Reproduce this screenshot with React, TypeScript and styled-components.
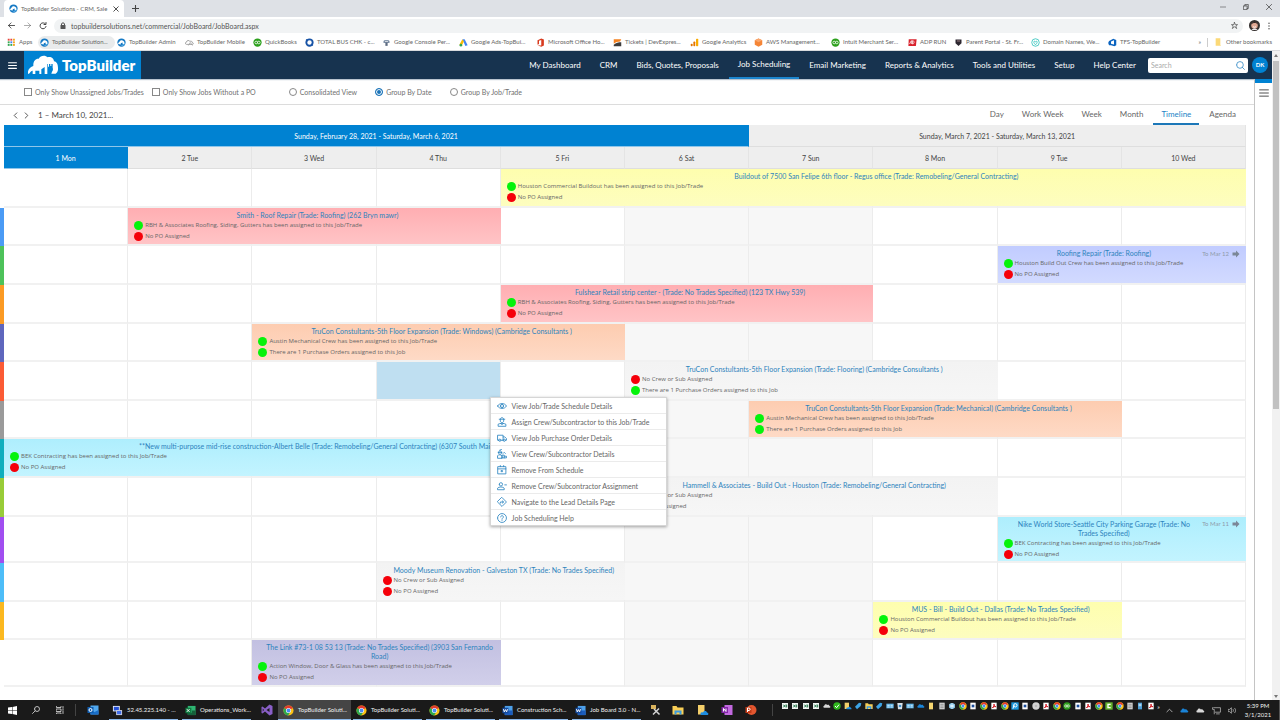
import React from "react";
import styled, { createGlobalStyle, css } from "styled-components";

const GlobalStyle = createGlobalStyle`
  *, *::before, *::after { box-sizing: border-box; }
  html, body, #root { height: 100%; }
  body { margin: 0; background: #fff; font-family: Lato, "Open Sans", sans-serif; font-size: 7px; line-height: 10px; color: #555; overflow: hidden; }
  button { font: inherit; color: inherit; border: 0; background: none; padding: 0; margin: 0; cursor: pointer; }
  input { font: inherit; margin: 0; }
  a { color: inherit; text-decoration: none; }
  ul { list-style: none; margin: 0; padding: 0; }
  svg { display: block; flex: none; }
`;

const blue = "#0082d2";
const navy = "#17334f";

const Screen = styled.div`
  display: flex;
  flex-direction: column;
  height: 100%;
  min-height: 720px;
`;

/* ---------- Browser chrome ---------- */

const TabStrip = styled.header`
  display: flex;
  align-items: flex-end;
  height: 17px;
  padding-left: 4px;
  background: #dee1e6;
`;
const Tab = styled.div`
  display: flex;
  align-items: center;
  gap: 3px;
  width: 120px;
  height: 17px;
  padding: 0 4px 0 5px;
  border-radius: 4px 4px 0 0;
  background: #fff;
`;
const TabTitle = styled.span`
  flex: 1;
  white-space: nowrap;
  font-size: 6px;
  color: #666;
`;
const IconButton = styled.button`
  display: flex;
  align-items: center;
  justify-content: center;
  width: 14px;
  height: 14px;
  color: #444;
`;
const TabClose = styled(IconButton)`
  width: 8px;
`;
const NewTab = styled(IconButton)`
  align-self: center;
  margin-left: 4px;
`;
const WindowButtons = styled.div`
  display: flex;
  align-self: flex-start;
  gap: 9px;
  margin-left: auto;
  padding-right: 4px;
`;
const AddressRow = styled.div`
  display: flex;
  align-items: center;
  height: 17px;
  padding: 0 4px;
  gap: 2px;
`;
const AddressBox = styled.div`
  display: flex;
  align-items: center;
  flex: 1;
  gap: 5px;
  height: 14px;
  margin: 0 4px 0 2px;
  padding: 0 2px 0 6px;
  border-radius: 7px;
  background: #f1f3f4;
`;
const AddressInput = styled.input`
  flex: 1;
  border: 0;
  padding: 0;
  background: none;
  font-size: 7px;
  line-height: 12px;
  color: #555;
  outline: none;
`;
const BookmarkBar = styled.nav`
  display: flex;
  align-items: center;
  height: 17px;
  padding: 0 8px 0 5px;
  font-size: 6px;
  color: #666;
  border-bottom: 1px solid #d8dadd;
`;
const Bookmark = styled.a<{ $w: number; $active?: boolean }>`
  display: flex;
  align-items: center;
  gap: 3px;
  width: ${(p) => p.$w}px;
  height: 13px;
  padding: 0 4px 0 2px;
  border-radius: 7px;
  background: ${(p) => (p.$active ? "#e9ebec" : "none")};
  white-space: nowrap;
`;
const BookmarkTail = styled.div`
  display: flex;
  align-items: center;
  gap: 6px;
  margin-left: auto;
  white-space: nowrap;
`;
const BookmarkRule = styled.i`
  width: 1px;
  height: 9px;
  background: #ccc;
`;
const FolderLink = styled.a`
  display: flex;
  align-items: center;
  gap: 4px;
`;

/* ---------- Application shell ---------- */

const Viewport = styled.div`
  display: flex;
  flex: 1;
  min-height: 0;
`;
const AppShell = styled.div`
  display: flex;
  flex-direction: column;
  flex: 1;
  min-width: 0;
`;
const NavBar = styled.nav`
  display: flex;
  align-items: center;
  height: 28px;
  padding-right: 4px;
  background: ${navy};
  color: #fff;
  box-shadow: 0 1px 1px #b9c4cf;
`;
const NavToggle = styled(IconButton)`
  width: 24px;
  height: 28px;
  color: #fff;
`;
const Brand = styled.a`
  display: flex;
  align-items: center;
  gap: 4px;
  width: 117px;
  height: 28px;
  padding-left: 4px;
  background: ${blue};
  font-size: 15px;
  line-height: 30px;
  font-weight: 800;
`;
const NavLinks = styled.ul`
  display: flex;
  gap: 1px;
  margin-left: auto;
`;
const NavLink = styled.a<{ $active?: boolean }>`
  display: block;
  height: 28px;
  padding: 0 9px;
  font-size: 8px;
  line-height: 28px;
  white-space: nowrap;
  ${(p) => p.$active && css`
    line-height: 26px;
    border-bottom: 2px solid #1c86cf;
  `}
`;
const SearchBox = styled.label`
  display: flex;
  align-items: center;
  width: 100px;
  height: 15px;
  margin: 0 4px 0 3px;
  padding: 0 3px;
  border-radius: 2px;
  background: #fff;
  color: #3d8fc9;
`;
const SearchInput = styled.input`
  flex: 1;
  min-width: 0;
  border: 0;
  padding: 0;
  outline: none;
  background: none;
  font-size: 7px;
  &::placeholder { color: #aaa; }
`;
const Avatar = styled.button`
  width: 16px;
  height: 16px;
  border-radius: 50%;
  background: ${blue};
  color: #fff;
  font-size: 6px;
  font-weight: 700;
`;
const Body = styled.div`
  display: flex;
  flex: 1;
  min-height: 0;
`;
const Main = styled.main`
  display: flex;
  flex-direction: column;
  flex: 1;
  min-width: 0;
  padding: 0 8px 13px 0;
  border-right: 1px solid #c4c4c4;
`;
const SidePanel = styled.aside`
  display: flex;
  flex-direction: column;
  align-items: center;
  width: 17px;
  padding-top: 3px;
  border-top: 4px solid ${blue};
`;
const Scrollbar = styled.div`
  display: flex;
  flex-direction: column;
  align-items: center;
  width: 8px;
  padding: 3px 1px 2px;
  gap: 4px;
  background: #f1f1f1;
  color: #777;
`;
const ScrollThumb = styled.i`
  width: 6px;
  height: 54%;
  background: #c1c1c1;
`;
const ScrollSpacer = styled.i`
  flex: 1;
`;

/* ---------- Filters and view switcher ---------- */

const FilterBar = styled.div`
  display: flex;
  align-items: center;
  height: 26px;
  margin-right: -8px;
  padding-left: 24px;
  border-bottom: 1px solid #dcdcdc;
  color: #707070;
`;
const Option = styled.label<{ $gap: number }>`
  display: flex;
  align-items: center;
  gap: 3px;
  margin-right: ${(p) => p.$gap}px;
  white-space: nowrap;
`;
const Toggle = styled.input`
  appearance: none;
  width: 8px;
  height: 8px;
  border: 1px solid #888;
  background: #fff;
  &[type="radio"] { border-radius: 50%; }
  &[type="radio"]:checked { border-color: #1a73b8; background: #1a73b8; box-shadow: inset 0 0 0 1px #fff; }
`;
const ViewBar = styled.div`
  display: flex;
  align-items: center;
  justify-content: space-between;
  height: 20px;
  padding: 0 2px 0 10px;
  font-size: 8px;
  color: #444;
`;
const Pager = styled.div`
  display: flex;
  align-items: center;
`;
const PagerButton = styled(IconButton)`
  width: 11px;
`;
const RangeLabel = styled.span`
  margin-left: 6px;
`;
const ViewTabs = styled.div`
  display: flex;
  gap: 2px;
`;
const ViewTab = styled.button<{ $active?: boolean }>`
  height: 20px;
  padding: 0 8px;
  line-height: 18px;
  border-bottom: 2px solid ${(p) => (p.$active ? "#1c77b8" : "transparent")};
  color: ${(p) => (p.$active ? "#2384c6" : "#666")};
`;

/* ---------- Timeline ---------- */

const Timeline = styled.section`
  display: flex;
  flex-direction: column;
  flex: 1;
`;
const columns = css`
  display: grid;
  grid-template-columns: repeat(10, 1fr);
`;
const HeaderRow = styled.div`
  ${columns}
  padding-left: 4px;
`;
const HeaderCell = styled.div<{ $span?: number; $active?: boolean }>`
  grid-column: span ${(p) => p.$span || 1};
  height: 22px;
  border-right: 1px solid #e4e4e4;
  border-bottom: 1px solid #dedede;
  background: #eee;
  color: #444;
  text-align: center;
  line-height: 22px;
  ${(p) => p.$active && css`
    background: ${blue};
    border-right-color: ${blue};
    border-bottom-color: #8fc6ea;
    color: #fff;
  `}
`;
const Row = styled.div<{ $mark: string; $tall?: boolean }>`
  ${columns}
  flex: ${(p) => (p.$tall ? 47 : 39)} 1 0;
  border-left: 4px solid ${(p) => p.$mark};
`;
const Cell = styled.div<{ $col: number; $off?: boolean; $selected?: boolean }>`
  position: relative;
  grid-area: 1 / ${(p) => p.$col};
  border-right: 1px solid #ececec;
  border-bottom: 2px solid #f1f1f1;
  background: ${(p) => (p.$selected ? "#bfdff1" : p.$off ? "#f7f7f7" : "#fff")};
`;
const tones = {
  yellow: ["#fefeae", "#fdfdbf"],
  pink: ["#ffaeb2", "#ffc4c6"],
  blue: ["#c1ccff", "#d2daff"],
  orange: ["#fdccb0", "#fedac6"],
  gray: ["#f3f3f3", "#f6f6f6"],
  cyan: ["#aeeefd", "#c3f4ff"],
  purple: ["#c2c0e1", "#d1cfea"],
};
const EventCard = styled.article<{ $start: number; $span: number; $tone: keyof typeof tones }>`
  z-index: 1;
  grid-row: 1;
  grid-column: ${(p) => p.$start} / span ${(p) => p.$span};
  margin-bottom: 2px;
  padding: 3px 6px 0;
  background: linear-gradient(${(p) => tones[p.$tone].join(",")});
`;
const EventTop = styled.div`
  display: flex;
  padding-left: 6px;
`;
const EventTitle = styled.a`
  flex: 1;
  font-size: 7px;
  line-height: 9px;
  text-align: center;
  color: #2d83bd;
`;
const Until = styled.span`
  display: flex;
  align-items: center;
  gap: 3px;
  height: 9px;
  margin-left: 4px;
  font-size: 6px;
  color: #8f9aab;
`;
const StatusLine = styled.p`
  display: flex;
  align-items: center;
  gap: 2px;
  margin: 0;
  font: 6px/11px "Open Sans", sans-serif;
  color: #666;
  white-space: nowrap;
`;
const Dot = styled.i<{ $ok: boolean }>`
  width: 9px;
  height: 9px;
  border-radius: 50%;
  background: ${(p) => (p.$ok ? "#05f30b" : "#f5000a")};
`;
const Menu = styled.ul`
  position: absolute;
  z-index: 10;
  top: 35px;
  left: 113px;
  width: 177px;
  background: #fff;
  border: 1px solid #d6d6d6;
  box-shadow: 0 1px 3px rgba(0, 0, 0, 0.35);
`;
const MenuItem = styled.li`
  border-bottom: 1px solid #ebebeb;
  &:last-child { border-bottom: 0; }
`;
const MenuButton = styled.button`
  display: flex;
  align-items: center;
  gap: 5px;
  width: 100%;
  height: 15px;
  padding: 0 6px;
  font-size: 7px;
  color: #666;
  svg { color: #2a84c0; }
`;

/* ---------- Taskbar ---------- */

const Taskbar = styled.footer`
  display: flex;
  height: 20px;
  background: #1a1a1a;
  color: #f0f0f0;
  font-size: 6px;
`;
const TaskIcon = styled.button<{ $w: number }>`
  display: flex;
  align-items: center;
  justify-content: center;
  width: ${(p) => p.$w}px;
`;
const TaskRule = styled.i`
  align-self: center;
  width: 1px;
  height: 12px;
  margin-left: 3px;
  background: #444;
`;
const TaskWindow = styled.button<{ $active?: boolean }>`
  display: flex;
  align-items: center;
  gap: 4px;
  width: ${(p) => (p.$active ? 73 : 69)}px;
  margin-right: ${(p) => (p.$active ? 2 : 4)}px;
  padding: 1px 0 0 ${(p) => (p.$active ? 5 : 3)}px;
  border-bottom: 1px solid #8db9ea;
  background: ${(p) => (p.$active ? "#454545" : "none")};
  white-space: nowrap;
`;
const QuickLaunch = styled.div`
  display: flex;
  flex: 1;
  justify-content: space-between;
  padding: 2px 6px 0 2px;
`;
const Tray = styled.div`
  display: flex;
  align-items: center;
  gap: 7px;
`;
const Clock = styled.time`
  width: 28px;
  text-align: center;
  line-height: 9px;
`;
const DesktopEdge = styled.i`
  align-self: stretch;
  width: 1px;
  background: #555;
`;

/* ---------- Icons ---------- */

const Line = ({ d, size = 8, box = 16, w = 1.5 }: { d: string; size?: number; box?: number; w?: number }) => (
  <svg width={size} height={size} viewBox={`0 0 ${box} ${box}`} fill="none" stroke="currentColor" strokeWidth={w} strokeLinecap="round" strokeLinejoin="round">
    <path d={d} />
  </svg>
);

const Elephant = () => (
  <svg width="30" height="20" viewBox="84 160 90 60" fill="#fff">
    <path d="M84 217C82 203 91 196 100 193C99 178 107 170 116 171C121 161 136 159 143 167C153 164 162 171 162 179C171 180 174 189 174 199C175 207 171 213 167 216H154L156 210C160 206 159 201 158 198V187H154V193H151V187H147V195H144V187H142V217H134V196L124 203V217H118V207H106V217H98V207C92 206 90 216 84 217Z" />
  </svg>
);

const Chrome = ({ size = 11 }: { size?: number }) => (
  <svg width={size} height={size} viewBox="0 0 24 24">
    <circle cx="12" cy="12" r="11" fill="#fbc116" />
    <path d="M12 12L2.5 6.5A11 11 0 0 1 21.5 6.5Z" fill="#e33b2e" />
    <path d="M12 12L2.5 6.5A11 11 0 0 0 11 23L16.500 14.500Z" fill="#2da94f" />
    <circle cx="12" cy="12" r="5.500" fill="#fff" />
    <circle cx="12" cy="12" r="4.200" fill="#4a8af4" />
  </svg>
);

type Glyph =
  | "apps" | "tb" | "cloud" | "qb" | "ring" | "wrench" | "ads" | "office" | "dx" | "bars" | "aws" | "adp" | "shield"
  | "gd" | "tfs" | "folder" | "xls" | "onedrive" | "check" | "tag" | "card" | "bin" | "note" | "doc" | "snow" | "chrome"
  | "word" | "pdf" | "blueapp" | "disc" | "camtasia" | "server" | "pc" | "outlook" | "vs" | "tools" | "explorer"
  | "share" | "onenote" | "ppt" | "bigword" | "bigxls" | "whitecloud";

const cloudPath = "M4 17C0 17 0 11 4 11C4 6 11 5 13 9C17 7 20 10 19 12C23 12 23 17 20 17Z";

const glyphs: Record<Exclude<Glyph, "chrome">, React.ReactNode> = {
  apps: <>{["#e8453c", "#e8453c", "#f5a623", "#34a853", "#4285f4", "#f5a623", "#34a853", "#34a853", "#f5a623"].map((c, i) => (
    <rect key={i} x={2 + (i % 3) * 7} y={2 + Math.floor(i / 3) * 7} width="5" height="5" fill={c} />
  ))}</>,
  tb: <><circle cx="12" cy="12" r="11" fill="#1579c4" /><path d="M3 16C3 11 6 12 7 9C9 5 15 5 17 8C20 9 20 12 19 16H15V12L10 14V17Z" fill="#fff" /><path d="M12 20A9 9 0 0 0 21 12" stroke="#8cd0f5" strokeWidth="2" fill="none" /></>,
  cloud: <><path d={cloudPath} fill="none" stroke="#8a8a8a" strokeWidth="2" /><path d="M9 20L14 12L20 20" fill="none" stroke="#999" strokeWidth="2" /></>,
  qb: <><circle cx="12" cy="12" r="11" fill="#2ca01c" /><circle cx="8.500" cy="12" r="3.500" fill="none" stroke="#fff" strokeWidth="2" /><circle cx="15.500" cy="12" r="3.500" fill="none" stroke="#fff" strokeWidth="2" /></>,
  ring: <><circle cx="12" cy="12" r="8.500" fill="none" stroke="#1753a6" strokeWidth="5" /><path d="M3 4L7 8M17 16L21 20" stroke="#1753a6" strokeWidth="3" /></>,
  wrench: <><path d="M4 9C4 4 20 4 20 9V13H4Z" fill="#7d8fa6" /><rect x="9" y="12" width="6" height="9" fill="#5d6b80" /><path d="M8 9H16" stroke="#fff" strokeWidth="2" /></>,
  ads: <><path d="M9 3L15 3L23 19L17 21Z" fill="#4285f4" /><path d="M9 3L13 9L7 21L1 18Z" fill="#fbbc04" /><circle cx="5" cy="19" r="3.500" fill="#34a853" /></>,
  office: <path fillRule="evenodd" d="M14 1L21 4V20L14 23L4 19L14 20V5L8 7V16L4 18V6Z" fill="#d83b1f" />,
  dx: <><path d="M2 3H22L19 9C12 9 7 11 2 15Z" fill="#f58220" /><path d="M2 18C8 12 15 11 22 11V22H2Z" fill="#3d3d3d" /></>,
  bars: <><rect x="2" y="15" width="5" height="7" rx="2" fill="#e37400" /><rect x="9" y="9" width="5" height="13" rx="2" fill="#e37400" /><rect x="16" y="2" width="6" height="20" rx="2" fill="#f9ab00" /></>,
  aws: <><path d="M12 1L22 6V18L12 23L2 18V6Z" fill="#f58536" /><path d="M12 1L22 6L12 11L2 6Z" fill="#f9a56b" /></>,
  adp: <><path d="M2 3H23L21 21H1Z" fill="#d9232e" /><path d="M4 16L9 7V16M12 7V16C17 16 18 7 12 7" stroke="#fff" strokeWidth="2" fill="none" /></>,
  shield: <><path d="M4 4H20V14L12 21L4 14Z" fill="#2d2730" /><path d="M8 8H16" stroke="#b99" strokeWidth="2" /></>,
  gd: <><circle cx="12" cy="12" r="10" fill="none" stroke="#1bbcb4" strokeWidth="2" /><path d="M12 18C5 12 7 6 12 10C17 6 19 12 12 18Z" fill="none" stroke="#1bbcb4" strokeWidth="2" /></>,
  tfs: <path fillRule="evenodd" d="M3 8L14 2L22 5V19L17 22L8 19H3L1 15V11ZM8 9V15L16 17V6Z" fill="#0b64c0" />,
  folder: <path d="M5 1H19V20L21 23H5Z" fill="#fbd977" />,
  xls: <><rect x="3" y="3" width="18" height="18" fill="#f2f7f3" /><path d="M7 8L14 16M14 8L7 16M17 8V16" stroke="#217346" strokeWidth="3" /></>,
  onedrive: <path d={cloudPath} fill="#1a84d8" />,
  whitecloud: <path d={cloudPath} fill="#d8d8d8" />,
  check: <><circle cx="12" cy="12" r="11" fill="#2fb61d" /><path d="M6 12L11 17L18 8" stroke="#fff" strokeWidth="3" fill="none" /></>,
  tag: <path d="M3 14L15 2L22 4L20 12L9 22Z" fill="#3ca4e6" />,
  card: <><rect x="1" y="5" width="22" height="14" fill="#5eb2e4" /><path d="M4 10H11M14 10H20M4 15H11M14 15H20" stroke="#fff" strokeWidth="2" /></>,
  bin: <><path d="M4 3H20L18 22H6Z" fill="#d9e3ea" /><circle cx="12" cy="12" r="4" fill="#3f8fcb" /></>,
  note: <path d="M6 2H18V22H6Z" fill="#f6d670" />,
  doc: <><rect x="4" y="2" width="16" height="20" fill="#d5d5d5" /><path d="M7 7H17M7 12H17M7 17H17" stroke="#777" strokeWidth="2" /></>,
  snow: <><circle cx="12" cy="12" r="9" fill="#7cc3ec" /><path d="M12 3V21M4 8L20 16M4 16L20 8" stroke="#fff" strokeWidth="2" /></>,
  word: <><rect x="4" y="2" width="16" height="20" fill="#fff" /><rect x="8" y="8" width="8" height="8" fill="#1c4f9c" /></>,
  pdf: <><rect x="4" y="2" width="16" height="20" fill="#fff" /><path d="M7 18C12 14 12 9 12 6C12 11 15 14 18 14C14 13 10 14 7 18Z" stroke="#d4202a" strokeWidth="3" fill="none" /></>,
  blueapp: <><rect x="1" y="1" width="22" height="22" fill="#1e9be0" /><circle cx="13" cy="10" r="5" fill="none" stroke="#fff" strokeWidth="3" /><path d="M9 9L6 20" stroke="#fff" strokeWidth="3" /></>,
  disc: <><circle cx="12" cy="12" r="11" fill="#d3d3d3" /><circle cx="12" cy="12" r="4" fill="#bbb" /></>,
  camtasia: <><rect x="1" y="1" width="22" height="22" fill="#65b32e" /><path d="M17 7H9V17H17" stroke="#fff" strokeWidth="4" fill="none" /></>,
  server: <><rect x="6" y="2" width="12" height="20" fill="#4e9fd6" /><path d="M8 7H16M8 11H16" stroke="#fff" strokeWidth="2" /></>,
  pc: <><rect x="2" y="2" width="15" height="12" fill="#e3e9f7" /><rect x="4" y="4" width="11" height="8" fill="#2550d8" /><rect x="9" y="11" width="13" height="11" fill="#c7cde0" /><rect x="11" y="13" width="9" height="7" fill="#3f6be8" /></>,
  outlook: <><rect x="7" y="3" width="16" height="18" fill="#50a8ee" /><path d="M7 12L15 16L23 12V21H7Z" fill="#1a6fc9" /><rect x="1" y="6" width="12" height="12" fill="#0f5db0" /><circle cx="7" cy="12" r="3" fill="none" stroke="#fff" strokeWidth="2" /></>,
  vs: <path fillRule="evenodd" d="M17 1L23 4V20L17 23L8 15L3 19L1 18V6L3 5L8 9ZM17 8L11 12L17 16ZM3.500 9V15L6 12Z" fill="#8a5fc7" />,
  tools: <><path d="M4 2H14V10H4Z" fill="#d8b25c" /><path d="M8 21L20 9M10 10L21 21" stroke="#d4d4d4" strokeWidth="3" /></>,
  explorer: <><path d="M1 4H9L11 7H23V21H1Z" fill="#f9cf57" /><path d="M5 21V13H19V21H15V17H9V21Z" fill="#3b9be0" /></>,
  share: <><path d="M2 2H15V21H2Z" fill="#f4cf6a" /><path d="M8 22C5 18 9 15 12 17C14 12 20 14 20 17C24 18 23 22 21 22Z" fill="#1f8de0" /></>,
  onenote: <><rect x="7" y="2" width="16" height="20" fill="#c269e0" /><rect x="1" y="6" width="13" height="12" fill="#8326a8" /><path d="M5 15V9L10 15V9" stroke="#fff" strokeWidth="2" fill="none" /></>,
  ppt: <><circle cx="13" cy="12" r="10" fill="#e2562f" /><rect x="1" y="6" width="12" height="12" fill="#c13a17" /><path d="M5 16V8H8C11 8 11 13 8 13H5" stroke="#fff" strokeWidth="2" fill="none" /></>,
  bigword: <><rect x="6" y="2" width="17" height="20" fill="#4da0ea" /><path d="M6 12H23V22H6Z" fill="#1b5cbe" /><rect x="1" y="6" width="13" height="12" fill="#144a9e" /><path d="M3 9L5 15L7.500 10L10 15L12 9" stroke="#fff" strokeWidth="2" fill="none" /></>,
  bigxls: <><rect x="6" y="2" width="17" height="20" fill="#2fb573" /><path d="M15 12H23V22H6V17H15Z" fill="#16603a" /><rect x="1" y="6" width="13" height="12" fill="#107c41" /><path d="M4 9L10 15M10 9L4 15" stroke="#fff" strokeWidth="2" /></>,
};

const Pic = ({ kind, size = 9 }: { kind: Glyph; size?: number }) =>
  kind === "chrome" ? <Chrome size={size} /> : <svg width={size} height={size} viewBox="0 0 24 24">{glyphs[kind]}</svg>;

/* ---------- Data ---------- */

const bookmarks: [Glyph, string, number][] = [
  ["apps", "Apps", 33],
  ["tb", "TopBuilder Solution...", 77],
  ["tb", "TopBuilder Admin", 68],
  ["cloud", "TopBuilder Mobile", 68],
  ["qb", "QuickBooks", 52],
  ["ring", "TOTAL BUS CHK - c...", 77],
  ["wrench", "Google Console Per...", 77],
  ["ads", "Google Ads-TopBui...", 77],
  ["office", "Microsoft Office Ho...", 77],
  ["dx", "Tickets | DevExpres...", 77],
  ["bars", "Google Analytics", 64],
  ["aws", "AWS Management...", 77],
  ["qb", "Intuit Merchant Ser...", 77],
  ["adp", "ADP RUN", 46],
  ["shield", "Parent Portal - St. Fr...", 77],
  ["gd", "Domain Names, We...", 77],
  ["tfs", "TFS-TopBuilder", 60],
];

const navItems = ["My Dashboard", "CRM", "Bids, Quotes, Proposals", "Job Scheduling", "Email Marketing", "Reports & Analytics", "Tools and Utilities", "Setup", "Help Center"];
const views = ["Day", "Work Week", "Week", "Month", "Timeline", "Agenda"];
const days = ["1 Mon", "2 Tue", "3 Wed", "4 Thu", "5 Fri", "6 Sat", "7 Sun", "8 Mon", "9 Tue", "10 Wed"];

const filters = [
  { type: "checkbox", label: "Only Show Unassigned Jobs/Trades", gap: 8 },
  { type: "checkbox", label: "Only Show Jobs Without a PO", gap: 33 },
  { type: "radio", label: "Consolidated View", gap: 18 },
  { type: "radio", label: "Group By Date", gap: 18, on: true },
  { type: "radio", label: "Group By Job/Trade", gap: 0 },
];

interface Job {
  mark: string;
  tall?: boolean;
  start: number;
  span: number;
  tone: keyof typeof tones;
  title: string;
  crew: string | null;
  po: boolean;
  until?: string;
  selected?: number;
}

const jobs: Job[] = [
  { mark: "#fff", start: 5, span: 6, tone: "yellow", title: "Buildout of 7500 San Felipe 6th floor - Regus office (Trade: Remobeling/General Contracting)", crew: "Houston Commercial Buildout", po: false },
  { mark: "#4b9bf5", start: 2, span: 3, tone: "pink", title: "Smith - Roof Repair (Trade: Roofing) (262 Bryn mawr)", crew: "RBH & Associates Roofing, Siding, Gutters", po: false },
  { mark: "#4dc25a", start: 9, span: 2, tone: "blue", title: "Roofing Repair (Trade: Roofing)", crew: "Houston Build Out Crew", po: false, until: "To Mar 12" },
  { mark: "#fb9a24", start: 5, span: 3, tone: "pink", title: "Fulshear Retail strip center - (Trade: No Trades Specified) (123 TX Hwy 539)", crew: "RBH & Associates Roofing, Siding, Gutters", po: false },
  { mark: "#5f67bd", start: 3, span: 3, tone: "orange", title: "TruCon Constultants-5th Floor Expansion (Trade: Windows) (Cambridge Consultants )", crew: "Austin Mechanical Crew", po: true },
  { mark: "#fb5b35", start: 6, span: 3, tone: "gray", title: "TruCon Constultants-5th Floor Expansion (Trade: Flooring) (Cambridge Consultants )", crew: null, po: true, selected: 4 },
  { mark: "#9a9a9a", start: 7, span: 3, tone: "orange", title: "TruCon Constultants-5th Floor Expansion (Trade: Mechanical) (Cambridge Consultants )", crew: "Austin Mechanical Crew", po: true },
  { mark: "#10aebd", start: 1, span: 5, tone: "cyan", title: "**New multi-purpose mid-rise construction-Albert Belle (Trade: Remobeling/General Contracting) (6307 South Main)", crew: "BEK Contracting", po: false },
  { mark: "#98cc38", start: 6, span: 3, tone: "gray", title: "Hammell & Associates - Build Out - Houston (Trade: Remobeling/General Contracting)", crew: null, po: false },
  { mark: "#a14ef0", tall: true, start: 9, span: 2, tone: "cyan", title: "Nike World Store-Seattle City Parking Garage (Trade: No Trades Specified)", crew: "BEK Contracting", po: false, until: "To Mar 11" },
  { mark: "#4dbdf8", start: 4, span: 2, tone: "gray", title: "Moody Museum Renovation - Galveston TX (Trade: No Trades Specified)", crew: null, po: false },
  { mark: "#fbb820", start: 8, span: 2, tone: "yellow", title: "MUS - Bill - Build Out - Dallas (Trade: No Trades Specified)", crew: "Houston Commercial Buildout", po: false },
  { mark: "#fff", tall: true, start: 3, span: 2, tone: "purple", title: "The Link #73-1 08 53 13 (Trade: No Trades Specified) (3903 San Fernando Road)", crew: "Action Window, Door & Glass", po: false },
];

const menuItems: [string, string][] = [
  ["View Job/Trade Schedule Details", "M1 9C4 3 14 3 17 9C14 15 4 15 1 9ZM6 9A3 3 0 1 0 12 9A3 3 0 1 0 6 9M9 9V9.200"],
  ["Assign Crew/Subcontractor to this Job/Trade", "M6 4C6 0 12 0 12 4M4 4H14M6 5V7C6 11 12 11 12 7V5M2 16V13C5 11 13 11 16 13V16ZM7 12L9 14L11 12"],
  ["View Job Purchase Order Details", "M3 13H1V4H11V13H7M11 7H14L17 10V13H15M3 13A2 2 0 1 0 7 13A2 2 0 1 0 3 13M11 13A2 2 0 1 0 15 13A2 2 0 1 0 11 13"],
  ["View Crew/Subcontractor Details", "M3 6C3 2 8 2 8 6M2 6H9M3 6V8C4 10 7 10 8 8V6M1 16V12C3 10 7 10 9 12V16ZM5 2L8 1M11 8L13 6L15 8M9 16V11H13V16M13 13H17V16H9"],
  ["Remove From Schedule", "M2 3H16V16H2ZM2 7H16M6 3V1M12 3V1M8 10H10V12H8Z"],
  ["Remove Crew/Subcontractor Assignment", "M4 6A3 3 0 1 0 10 6A3 3 0 1 0 4 6M1 15V13C3 10 11 10 13 13V15ZM14 7H17"],
  ["Navigate to the Lead Details Page", "M9 1L17 9L9 17L1 9ZM6 11V9H11M9.500 7L12 9L9.500 11"],
  ["Job Scheduling Help", "M1 9A8 8 0 1 0 17 9A8 8 0 1 0 1 9M6.500 7C6.500 4 11.500 4 11.500 7C11.500 9 9 9 9 11M9 13V13.200"],
];

const quickIcons: Glyph[] = [
  "xls", "xls", "xls", "xls", "whitecloud", "check", "share", "tag", "explorer", "tag", "card", "bin", "card", "onedrive", "note", "doc",
  "snow", "chrome", "word", "chrome", "pdf", "chrome", "blueapp", "word", "disc", "pdf", "chrome", "qb", "word", "pdf", "chrome",
  "camtasia", "chrome", "doc", "server", "pdf",
];

const ContextMenu = () => (
  <Menu role="menu">
    {menuItems.map(([label, d]) => (
      <MenuItem key={label} role="none">
        <MenuButton role="menuitem">
          <Line d={d} size={10} box={18} w={1.5} />
          {label}
        </MenuButton>
      </MenuItem>
    ))}
  </Menu>
);

const Status = ({ ok, children }: { ok: boolean; children: React.ReactNode }) => (
  <StatusLine><Dot $ok={ok} />{children}</StatusLine>
);

const JobRow = ({ job }: { job: Job }) => (
  <Row $mark={job.mark} $tall={job.tall}>
    {days.map((day, i) => (
      <Cell key={day} $col={i + 1} $off={i === 5 || i === 6} $selected={job.selected === i + 1}>
        {job.selected === i + 1 && <ContextMenu />}
      </Cell>
    ))}
    <EventCard $start={job.start} $span={job.span} $tone={job.tone}>
      <EventTop>
        <EventTitle href="#job">{job.title}</EventTitle>
        {job.until && (
          <Until>
            {job.until}
            <svg width="8" height="8" viewBox="0 0 16 16" fill="#7b8798"><path d="M1 5H8V1L15 8L8 15V11H1Z" /></svg>
          </Until>
        )}
      </EventTop>
      <Status ok={!!job.crew}>{job.crew ? `${job.crew} has been assigned to this Job/Trade` : "No Crew or Sub Assigned"}</Status>
      <Status ok={job.po}>{job.po ? "There are 1 Purchase Orders assigned to this Job" : "No PO Assigned"}</Status>
    </EventCard>
  </Row>
);

const Browser = () => (
  <>
    <TabStrip>
      <Tab>
        <Pic kind="tb" />
        <TabTitle>TopBuilder Solutions - CRM, Sale</TabTitle>
        <TabClose aria-label="Close tab"><Line size={6} w={2.500} d="M2 2L14 14M14 2L2 14" /></TabClose>
      </Tab>
      <NewTab aria-label="New tab"><Line size={7} w={2.500} d="M8 1V15M1 8H15" /></NewTab>
      <WindowButtons>
        <IconButton aria-label="Minimize"><Line size={6} d="M1 8H15" /></IconButton>
        <IconButton aria-label="Restore"><Line size={6} w={2} d="M2 5H11V15H2ZM5 5V1H14V12H11" /></IconButton>
        <IconButton aria-label="Close"><Line size={6} w={2} d="M1 1L15 15M15 1L1 15" /></IconButton>
      </WindowButtons>
    </TabStrip>
    <AddressRow>
      <IconButton aria-label="Back"><Line size={7} w={2} d="M15 8H1M7 2L1 8L7 14" /></IconButton>
      <IconButton aria-label="Forward"><Line size={7} w={1} d="M1 8H15M9 2L15 8L9 14" /></IconButton>
      <IconButton aria-label="Reload"><Line size={8} w={2} d="M13 4A6 6 0 1 0 14 9M14 1V5H10" /></IconButton>
      <AddressBox>
        <svg width="6" height="8" viewBox="0 0 12 16"><rect x="1" y="6" width="10" height="8" rx="1" fill="#555" /><path d="M3 6V4C3 1 9 1 9 4V6" fill="none" stroke="#555" strokeWidth="2" /></svg>
        <AddressInput aria-label="Address" defaultValue="topbuildersolutions.net/commercial/JobBoard/JobBoard.aspx" />
        <IconButton aria-label="Bookmark this page"><Line size={7} d="M8 1L10 6L15 6L11 9L13 15L8 11L3 15L5 9L1 6L6 6Z" /></IconButton>
      </AddressBox>
      <svg width="11" height="11" viewBox="0 0 22 22">
        <circle cx="11" cy="11" r="11" fill="#35302f" />
        <circle cx="11" cy="11" r="6.500" fill="#e0a893" />
        <path d="M4 9C5 2 17 2 18 9C15 5 8 5 4 9Z" fill="#2b2120" />
        <path d="M5 20C8 16 14 16 17 20Z" fill="#e9e9ee" />
        <path d="M8 13C10 15 12 15 14 13" stroke="#fff" strokeWidth="2" fill="none" />
      </svg>
      <IconButton aria-label="Browser menu"><svg width="6" height="8" viewBox="0 0 12 16" fill="#555"><circle cx="6" cy="2.500" r="1.500" /><circle cx="6" cy="8" r="1.500" /><circle cx="6" cy="13.500" r="1.500" /></svg></IconButton>
    </AddressRow>
    <BookmarkBar>
      {bookmarks.map(([kind, label, w], i) => (
        <Bookmark key={label} href="#bookmark" $w={w} $active={i === 1}><Pic kind={kind} />{label}</Bookmark>
      ))}
      <BookmarkTail>
        <span>»</span>
        <BookmarkRule />
        <FolderLink href="#bookmarks"><Pic kind="folder" size={8} />Other bookmarks</FolderLink>
      </BookmarkTail>
    </BookmarkBar>
  </>
);

const NavSection = () => (
  <NavBar>
    <NavToggle aria-label="Menu"><Line size={9} w={2} d="M1 3H15M1 8H15M1 13H15" /></NavToggle>
    <Brand href="#home"><Elephant />TopBuilder</Brand>
    <NavLinks>
      {navItems.map((item) => (
        <li key={item}><NavLink href="#nav" $active={item === "Job Scheduling"}>{item}</NavLink></li>
      ))}
    </NavLinks>
    <SearchBox>
      <SearchInput type="text" placeholder="Search" aria-label="Search" />
      <Line size={9} d="M1 7A6 6 0 1 0 13 7A6 6 0 1 0 1 7M11 11L15 15" />
    </SearchBox>
    <Avatar>DK</Avatar>
  </NavBar>
);

const windowsLeft: [Glyph, string][] = [["pc", "52.45.225.140 - ..."], ["bigxls", "Operations_Work..."]];
const windowsRight: [Glyph, string][] = [
  ["chrome", "TopBuilder Soluti..."], ["chrome", "TopBuilder Soluti..."], ["chrome", "TopBuilder Soluti..."],
  ["bigword", "Construction Sch..."], ["bigword", "Job Board 3.0 - N..."],
];

const TaskbarSection = () => (
  <Taskbar>
    <TaskIcon $w={24} aria-label="Start"><svg width="9" height="9" viewBox="0 0 18 18" fill="#fff"><path d="M0 3L8 2V8.500H0ZM9 2L18 0V8.500H9ZM0 9.500H8V16L0 15ZM9 9.500H18V18L9 16Z" /></svg></TaskIcon>
    <TaskIcon $w={24} aria-label="Search"><Line d="M5 6A5 5 0 1 0 15 6A5 5 0 1 0 5 6M6 10L1 15" /></TaskIcon>
    <TaskIcon $w={24} aria-label="Task view"><Line d="M1 1V3H10V1M1 6H10V11H1ZM1 15V14H10V15M14 1V4M14 6V8M14 10V15" /></TaskIcon>
    <TaskRule />
    <TaskIcon $w={33} aria-label="Outlook"><Pic kind="outlook" size={12} /></TaskIcon>
    {windowsLeft.map(([kind, label]) => <TaskWindow key={label}><Pic kind={kind} size={11} />{label}</TaskWindow>)}
    <TaskIcon $w={23} aria-label="Visual Studio"><Pic kind="vs" size={12} /></TaskIcon>
    {windowsRight.map(([kind, label], i) => <TaskWindow key={i} $active={i === 0}><Pic kind={kind} size={11} />{label}</TaskWindow>)}
    <TaskIcon $w={20} aria-label="Tools"><Pic kind="tools" size={12} /></TaskIcon>
    <TaskIcon $w={26} aria-label="File Explorer"><Pic kind="explorer" size={12} /></TaskIcon>
    <TaskIcon $w={24} aria-label="Shared files"><Pic kind="share" size={12} /></TaskIcon>
    <TaskIcon $w={24} aria-label="OneNote"><Pic kind="onenote" size={12} /></TaskIcon>
    <TaskIcon $w={24} aria-label="PowerPoint"><Pic kind="ppt" size={12} /></TaskIcon>
    <TaskIcon $w={16} aria-label="Toolbar handle"><TaskRule /></TaskIcon>
    <QuickLaunch>
      {quickIcons.map((kind, i) => <Pic key={i} kind={kind} size={8} />)}
      <span>»</span>
    </QuickLaunch>
    <Tray>
      <Line size={7} d="M2 11L8 5L14 11" />
      <Pic kind="onedrive" size={9} />
      <Pic kind="whitecloud" size={9} />
      <Line size={9} d="M3 3H15V11H6M1 3V6H4V14M8 14H13" w={1} />
      <Line size={9} d="M1 6H3L6 3V13L3 10H1ZM9 6C10 7 10 9 9 10M12 4C14 6 14 10 12 12" w={1} />
      <Clock>5:39 PM<br />3/1/2021</Clock>
      <DesktopEdge />
    </Tray>
  </Taskbar>
);

export default function App() {
  return (
    <Screen>
      <GlobalStyle />
      <Browser />
      <Viewport>
        <AppShell>
          <NavSection />
          <Body>
            <Main>
              <FilterBar>
                {filters.map((f) => (
                  <Option key={f.label} $gap={f.gap}>
                    <Toggle type={f.type} name={f.type === "radio" ? "grouping" : undefined} defaultChecked={f.on} />
                    {f.label}
                  </Option>
                ))}
              </FilterBar>
              <ViewBar>
                <Pager>
                  <PagerButton aria-label="Previous"><Line size={7} w={2} d="M11 2L5 8L11 14" /></PagerButton>
                  <PagerButton aria-label="Next"><Line size={7} w={2} d="M5 2L11 8L5 14" /></PagerButton>
                  <RangeLabel>1 – March 10, 2021...</RangeLabel>
                </Pager>
                <ViewTabs>
                  {views.map((v) => <ViewTab key={v} $active={v === "Timeline"}>{v}</ViewTab>)}
                </ViewTabs>
              </ViewBar>
              <Timeline>
                <HeaderRow>
                  <HeaderCell $span={6} $active>Sunday, February 28, 2021 - Saturday, March 6, 2021</HeaderCell>
                  <HeaderCell $span={4}>Sunday, March 7, 2021 - Saturday, March 13, 2021</HeaderCell>
                  {days.map((d, i) => <HeaderCell key={d} $active={i === 0}>{d}</HeaderCell>)}
                </HeaderRow>
                {jobs.map((job) => <JobRow key={job.title} job={job} />)}
              </Timeline>
            </Main>
            <SidePanel>
              <IconButton aria-label="Open panel"><Line size={10} d="M1 3H15M1 8H15M1 13H15" /></IconButton>
            </SidePanel>
          </Body>
        </AppShell>
        <Scrollbar aria-hidden="true">
          <svg width="4" height="3" viewBox="0 0 8 6" fill="currentColor"><path d="M4 0L8 6H0Z" /></svg>
          <ScrollThumb />
          <ScrollSpacer />
          <svg width="4" height="3" viewBox="0 0 8 6" fill="currentColor"><path d="M4 6L8 0H0Z" /></svg>
        </Scrollbar>
      </Viewport>
      <TaskbarSection />
    </Screen>
  );
}
